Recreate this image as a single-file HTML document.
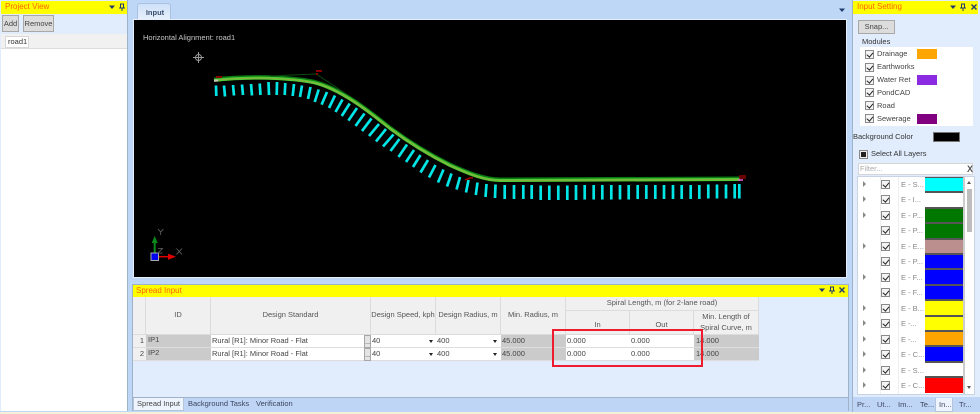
<!DOCTYPE html>
<html><head><meta charset="utf-8"><style>
html,body{margin:0;padding:0;width:980px;height:414px;overflow:hidden;background:#bfd7f6}
body{position:relative;font-family:"Liberation Sans",sans-serif;font-size:7.5px;color:#444}
.a{position:absolute;box-sizing:border-box}
.t{position:absolute;white-space:nowrap;line-height:12px;height:12px}
.y{background:#ffff00;color:#ff6200;font-size:8px;line-height:12px}
.h{position:absolute;box-sizing:border-box;background:#f0f0f0;border-right:1px solid #dcdcdc;border-bottom:1px solid #dcdcdc;display:flex;align-items:center;justify-content:center;text-align:center;line-height:10.5px;color:#555;white-space:nowrap}
.c{position:absolute;box-sizing:border-box;height:13px;line-height:12px;background:#fff;border-bottom:1px solid #ddd;padding-left:1px;white-space:nowrap;color:#444}
.g{background:#cbcbcb}
.b{position:absolute;box-sizing:border-box;background:#dcdcdc;border:1px solid #a8a8a8;text-align:center;color:#444;line-height:15px}
.k{position:absolute;box-sizing:border-box;width:9px;height:9px;background:#f4f4f4;border:1px solid #8a8a8a}
.k:after{content:"";position:absolute;left:2px;top:0;width:2.5px;height:5px;border:solid #222;border-width:0 1.4px 1.4px 0;transform:rotate(40deg)}
.s{position:absolute;left:925px;width:38px;height:15.4px;box-sizing:border-box;border-bottom:1px solid #555;border-top:1px solid #555}
.ar{position:absolute;left:863px;width:0;height:0;border-left:3.5px solid #888;border-top:3.5px solid transparent;border-bottom:3.5px solid transparent}
.n{position:absolute;left:901px;color:#888;white-space:nowrap;line-height:12px}
.dd{position:absolute;width:0;height:0;border-left:2.5px solid transparent;border-right:2.5px solid transparent;border-top:3px solid #222}
</style></head><body>

<!-- Left panel -->
<div class="a" style="left:0;top:0;width:128px;height:411px;background:#e1edfd;border-right:1px solid #9fb2c8"></div>
<div class="a y" style="left:1px;top:1px;width:126px;height:13px;padding-left:4px">Project View</div>
<div class="b" style="left:2px;top:15px;width:17px;height:17px">Add</div>
<div class="b" style="left:23px;top:15px;width:31px;height:17px">Remove</div>
<div class="a" style="left:1px;top:34px;width:126px;height:377px;background:#fff"></div>
<div class="a" style="left:1px;top:34px;width:126px;height:15px;background:#f1f1f1;border-bottom:1px solid #ddd"></div>
<div class="a" style="left:5px;top:36px;width:24px;height:12px;background:#fff;border:1px solid #d8d8d8;line-height:10px;padding-left:2px;color:#333">road1</div>

<!-- Center top -->
<div class="a" style="left:137px;top:3px;width:34px;height:17px;background:linear-gradient(#cfe0f8,#e8f1fd);border:1px solid #a9c2e2;border-bottom:0;border-radius:3px 3px 0 0;text-align:center;line-height:17px;color:#3a4f6e;font-weight:bold;font-size:7.5px;padding-left:2px">Input</div>
<div class="a" style="left:133px;top:19px;width:714px;height:259px;background:#000;border:1px solid #e6eef9"></div>
<svg class="a" style="left:0;top:0" width="980" height="414" viewBox="0 0 980 414">
<path d="M216 85.5L216.3 96M224 85.5L225 96.5M233 85L234 95.5M242 84.5L243 95M251 84L252 95.5M259.7 83.5L260.5 95M268.5 82L269 95M277 82L276.7 95M285.3 83L284.7 95M294 84L292.7 96M302 85.5L300 97M310.5 87L308 99M318.700 89.500L314.700 102M327 92L321.600 104.600M335 95.500L329 108M342.500 99.500L335.500 112M349.700 103.500L341.700 116M357 108L348.400 120.600M364.500 113.500L355.500 126M371.500 118.500L362 131M379 124L369 136M386 129L376 141.500M393.500 134.500L383 146.500M399.500 139L390.500 151M407 144.500L398.500 157M414 150L406 162M420.500 155L413 167M428 160L420.500 172.500M435.500 165L429 177.500M443.500 169.500L438 182.500M451.500 173.500L447 186.500M460 177L456.500 189.500M468.5 180L466 192.5M477.5 182.5L475.8 195M486.5 184L485.5 197M495.5 184.5L495 198M504.7 185L504.7 199M514 185L514 199M523.3 185L523.3 199M531.7 185L531.7 199M540.7 185.5L540.7 200M549.3 185.5L549.3 200M558.3 185.5L558.3 200M567.3 185.5L567.3 200M576 185L576 200M584.7 185L584.7 199.5M593.7 185L593.7 199.5M602.3 185L602.3 199.5M611.3 185L611.3 199.5M620 185L620 199.5M628.7 185L628.7 199.5M637.7 185L637.7 199M646.3 185L646.3 199M655.3 185L655.3 199M664 185L664 199M673 185L673 199M681.7 185L681.7 199M690.7 185L690.7 199M699.3 185L699.3 199M708.3 184.5L708.3 198.5M717 184.5L717 198.5M726 184.5L726 198.5M734.7 184L734.7 198.5M739.3 184L739.3 198.5" stroke="#00e6e6" stroke-width="2.7" fill="none"/>
<path d="M214 78.500C240 75.500 280 74.500 313 80.500C340 86.500 370 110.500 390 126.500C410 141.500 430 153.500 450 163.500C470 172.500 485 178.500 500 178.500L740 177.500" stroke="#0a7a12" stroke-width="2" fill="none"/>
<path d="M214 80.5C240 77.5 280 76.5 313 82.5C340 88.5 370 112.5 390 128.5C410 143.5 430 155.5 450 165.5C470 174.5 485 180.5 500 180.5L740 179.5" stroke="#52cc34" stroke-width="3" fill="none"/>
<path d="M214 80.5C240 77.5 280 76.5 313 82.5C340 88.5 370 112.5 390 128.5C410 143.5 430 155.5 450 165.5C470 174.5 485 180.5 500 180.5L740 179.5" stroke="#96a844" stroke-width="0.8" fill="none"/>
<path d="M270 76L316 74L345 93" stroke="#0a4a12" stroke-width="1" fill="none"/>
<path d="M738 180L743 180" stroke="#e060e0" stroke-width="1.5"/>
<path d="M214 80.5L218 80.5" stroke="#d0c0c0" stroke-width="2"/>
<path d="M316 71H322M316 74H318M216 77H222" stroke="#8a0000" stroke-width="2"/>
<path d="M465 180L470 178H473" stroke="#a00000" stroke-width="1.5" fill="none"/>
<path d="M739 176H746M739 178H746" stroke="#8a0000" stroke-width="1.6"/>
<circle cx="198.500" cy="57.500" r="3" fill="none" stroke="#999" stroke-width="1"/>
<path d="M193 57.500H204M198.500 52V63" stroke="#999" stroke-width="1"/>
<path d="M154.700 253V240" stroke="#0a8a1a" stroke-width="2"/>
<path d="M154.700 236L151.700 243H157.700Z" fill="#0a8a1a"/>
<path d="M159 256.700H170" stroke="#e00000" stroke-width="1.500"/>
<path d="M176 256.700L168 253.700V259.700Z" fill="#e00000"/>
<rect x="151" y="253" width="7.500" height="7.500" fill="#0000f0" stroke="#aaa" stroke-width="1"/>
<path d="M158 229L160.700 232L163.400 229M160.700 232V235M176.500 248.500L182 254.500M182 248.500L176.500 254.500M158 248.500H162.500L158 253H162.500" stroke="#666" stroke-width="0.800" fill="none"/>
</svg>
<div class="t" style="left:143px;top:32px;color:#c8c8c8">Horizontal Alignment: road1</div>

<!-- Spread panel -->
<div class="a" style="left:132px;top:284px;width:717px;height:127px;background:#e1edfd;border:1px solid #9fb2c8"></div>
<div class="a y" style="left:133px;top:285px;width:715px;height:12px;padding-left:3px;line-height:12px">Spread Input</div>

<div class="h" style="left:133px;top:297px;width:13px;height:38px"></div>
<div class="h" style="left:146px;top:297px;width:65px;height:38px">ID</div>
<div class="h" style="left:211px;top:297px;width:160px;height:38px">Design Standard</div>
<div class="h" style="left:371px;top:297px;width:65px;height:38px">Design Speed, kph</div>
<div class="h" style="left:436px;top:297px;width:65px;height:38px">Design Radius, m</div>
<div class="h" style="left:501px;top:297px;width:65px;height:38px">Min. Radius, m</div>
<div class="h" style="left:566px;top:297px;width:193px;height:14px">Spiral Length, m (for 2-lane road)</div>
<div class="h" style="left:566px;top:311px;width:64px;height:24px;padding-top:6px">In</div>
<div class="h" style="left:630px;top:311px;width:64px;height:24px;padding-top:6px">Out</div>
<div class="h" style="left:694px;top:311px;width:65px;height:24px">Min. Length of<br>Spiral Curve, m</div>

<div class="c" style="left:133px;top:335px;width:13px;background:#f0f0f0;text-align:right;padding-right:2px">1</div>
<div class="c g" style="left:146px;top:335px;width:65px;padding-left:2px;line-height:10px">IP1</div>
<div class="c" style="left:211px;top:335px;width:160px">Rural [R1]: Minor Road - Flat</div>
<div class="b" style="left:364px;top:335px;width:7px;height:13px;line-height:13px;background:#e4e4e4;font-size:7px">...</div>
<div class="c" style="left:371px;top:335px;width:65px">40</div><div class="dd" style="left:429px;top:340px"></div>
<div class="c" style="left:436px;top:335px;width:65px">400</div><div class="dd" style="left:493px;top:340px"></div>
<div class="c g" style="left:501px;top:335px;width:65px">45.000</div>
<div class="c" style="left:566px;top:335px;width:64px">0.000</div>
<div class="c" style="left:630px;top:335px;width:64px">0.000</div>
<div class="c g" style="left:694px;top:335px;width:65px;padding-left:2px">14.000</div>

<div class="c" style="left:133px;top:348px;width:13px;background:#f0f0f0;text-align:right;padding-right:2px">2</div>
<div class="c g" style="left:146px;top:348px;width:65px;padding-left:2px;line-height:10px">IP2</div>
<div class="c" style="left:211px;top:348px;width:160px">Rural [R1]: Minor Road - Flat</div>
<div class="b" style="left:364px;top:348px;width:7px;height:13px;line-height:13px;background:#e4e4e4;font-size:7px">...</div>
<div class="c" style="left:371px;top:348px;width:65px">40</div><div class="dd" style="left:429px;top:353px"></div>
<div class="c" style="left:436px;top:348px;width:65px">400</div><div class="dd" style="left:493px;top:353px"></div>
<div class="c g" style="left:501px;top:348px;width:65px">45.000</div>
<div class="c" style="left:566px;top:348px;width:64px">0.000</div>
<div class="c" style="left:630px;top:348px;width:64px">0.000</div>
<div class="c g" style="left:694px;top:348px;width:65px;padding-left:2px">14.000</div>

<div class="a" style="left:552px;top:329px;width:151px;height:38px;border:2.5px solid #ee1c2e"></div>

<div class="a" style="left:133px;top:397px;width:715px;height:14px;background:#bfd5f5;border-top:1px solid #9fb2c8"></div>
<div class="a" style="left:133px;top:398px;width:51px;height:13px;background:#eef4fd;border:1px solid #b4c4da;border-top:0;text-align:center;line-height:12px;color:#444">Spread Input</div>
<div class="t" style="left:188px;top:398px;color:#3a4560">Background Tasks</div>
<div class="t" style="left:256px;top:398px;color:#3a4560">Verification</div>

<!-- Right panel -->
<div class="a" style="left:852px;top:0;width:128px;height:412px;background:#e1edfd;border-left:1px solid #9fb2c8"></div>
<div class="a y" style="left:853px;top:1px;width:125px;height:13px;padding-left:4px">Input Setting</div>
<div class="b" style="left:858px;top:20px;width:37px;height:14px;line-height:12px">Snap...</div>
<div class="t" style="left:862px;top:36px;color:#333">Modules</div>
<div class="a" style="left:860px;top:47px;width:113px;height:79px;background:#fff"></div>

<div class="k" style="left:865px;top:50px"></div><div class="t" style="left:877px;top:48px">Drainage</div>
<div class="a" style="left:917px;top:49px;width:20px;height:10px;background:#ffa500"></div>
<div class="k" style="left:865px;top:63px"></div><div class="t" style="left:877px;top:61px">Earthworks</div>
<div class="k" style="left:865px;top:76px"></div><div class="t" style="left:877px;top:74px">Water Ret</div>
<div class="a" style="left:917px;top:75px;width:20px;height:10px;background:#8a2be2"></div>
<div class="k" style="left:865px;top:88px"></div><div class="t" style="left:877px;top:87px">PondCAD</div>
<div class="k" style="left:865px;top:101px"></div><div class="t" style="left:877px;top:100px">Road</div>
<div class="k" style="left:865px;top:114px"></div><div class="t" style="left:877px;top:113px">Sewerage</div>
<div class="a" style="left:917px;top:114px;width:20px;height:10px;background:#800080"></div>

<div class="t" style="left:853px;top:131px;color:#333">Background Color</div>
<div class="a" style="left:933px;top:132px;width:27px;height:10px;background:#000;border:1px solid #777"></div>
<div class="a" style="left:859px;top:150px;width:9px;height:9px;background:#eee;border:1px solid #888"></div>
<div class="a" style="left:861px;top:152px;width:5px;height:5px;background:#222"></div>
<div class="t" style="left:871px;top:148px;color:#333">Select All Layers</div>
<div class="a" style="left:858px;top:163px;width:115px;height:12px;background:#fff;border:1px solid #d5d5d5;line-height:10px;padding-left:1px;color:#aaa">Filter...</div>
<div class="t" style="left:967px;top:163px;color:#555;font-weight:bold;font-size:9px">X</div>

<div class="a" style="left:857px;top:176px;width:118px;height:219px;background:#fff;border:1px solid #c8d4e4"></div>
<div class="a" style="left:880px;top:177px;width:1px;height:217px;background:#eee"></div>
<div class="a" style="left:898px;top:177px;width:1px;height:217px;background:#eee"></div>
<div class="a" style="left:963px;top:177px;width:2px;height:217px;background:#ccc"></div>
<div class="a" style="left:967px;top:189px;width:5px;height:43px;background:#bdbdbd"></div>
<div class="dd" style="left:967px;top:386px;border-top-color:#555;border-left-width:2px;border-right-width:2px"></div>
<div class="dd" style="left:967px;top:181px;border-top:0;border-bottom:3px solid #555;border-left-width:2px;border-right-width:2px"></div>

<div class="ar" style="top:181px"></div><div class="k" style="left:881px;top:180px"></div><div class="n" style="top:179px">E - S...</div><div class="s" style="top:177px;background:#00ffff"></div>
<div class="ar" style="top:196px"></div><div class="k" style="left:881px;top:195px"></div><div class="n" style="top:194px">E - I...</div><div class="s" style="top:192.400px;background:#fff"></div>
<div class="ar" style="top:212px"></div><div class="k" style="left:881px;top:211px"></div><div class="n" style="top:210px">E - P...</div><div class="s" style="top:207.800px;background:#007800"></div>
<div class="k" style="left:881px;top:226px"></div><div class="n" style="top:225px">E - P...</div><div class="s" style="top:223.200px;background:#007800"></div>
<div class="ar" style="top:243px"></div><div class="k" style="left:881px;top:242px"></div><div class="n" style="top:241px">E - E...</div><div class="s" style="top:238.600px;background:#bc8f8f"></div>
<div class="k" style="left:881px;top:257px"></div><div class="n" style="top:256px">E - P...</div><div class="s" style="top:254px;background:#0000ff"></div>
<div class="ar" style="top:274px"></div><div class="k" style="left:881px;top:273px"></div><div class="n" style="top:272px">E - F...</div><div class="s" style="top:269.400px;background:#0000ff"></div>
<div class="k" style="left:881px;top:288px"></div><div class="n" style="top:287px">E - F...</div><div class="s" style="top:284.800px;background:#0000ff"></div>
<div class="ar" style="top:305px"></div><div class="k" style="left:881px;top:304px"></div><div class="n" style="top:303px">E - B...</div><div class="s" style="top:300.200px;background:#ffff00"></div>
<div class="ar" style="top:320px"></div><div class="k" style="left:881px;top:319px"></div><div class="n" style="top:318px">E -...</div><div class="s" style="top:315.600px;background:#ffff00"></div>
<div class="ar" style="top:336px"></div><div class="k" style="left:881px;top:335px"></div><div class="n" style="top:334px">E -...</div><div class="s" style="top:331px;background:#ffa500"></div>
<div class="ar" style="top:351px"></div><div class="k" style="left:881px;top:350px"></div><div class="n" style="top:349px">E - C...</div><div class="s" style="top:346.400px;background:#0000ff"></div>
<div class="ar" style="top:367px"></div><div class="k" style="left:881px;top:366px"></div><div class="n" style="top:365px">E - S...</div><div class="s" style="top:361.800px;background:#fff"></div>
<div class="ar" style="top:382px"></div><div class="k" style="left:881px;top:381px"></div><div class="n" style="top:380px">E - C...</div><div class="s" style="top:377.200px;height:15.800px;background:#ff0000;border-bottom:0"></div>

<div class="a" style="left:853px;top:397px;width:127px;height:15px;background:#bfd5f5"></div>
<div class="a" style="left:935px;top:398px;width:18px;height:14px;background:#eef4fd;border:1px solid #b4c4da;border-top:0"></div>
<div class="t" style="left:857px;top:399px;color:#3a4560">Pr...</div>
<div class="t" style="left:877px;top:399px;color:#3a4560">Ut...</div>
<div class="t" style="left:898px;top:399px;color:#3a4560">Im...</div>
<div class="t" style="left:920px;top:399px;color:#3a4560">Te...</div>
<div class="t" style="left:939px;top:399px;color:#3a4560">In...</div>
<div class="t" style="left:959px;top:399px;color:#3a4560">Tr...</div>

<div class="a" style="left:0;top:412px;width:980px;height:2px;background:#f4f1d8"></div>

<!-- Title bar glyphs: dropdown arrows, pins, close marks -->
<svg class="a" style="left:0;top:0" width="980" height="414" viewBox="0 0 980 414">
<path d="M109 5.500H115L112 9ZM950 5.500H956L953 9ZM819 288.500H825L822 292ZM839 8.500H845L842 12Z" fill="#1f3a6e"/>
<path d="M120 4H124M120.500 4V8M123.500 4V8M119 8H125M122 8V11M961 4H965M961.500 4V8M964.500 4V8M960 8H966M963 8V11M830 287H834M830.500 287V291M833.500 287V291M829 291H835M832 291V294" stroke="#1f3a6e" stroke-width="1" fill="none"/>
<path d="M971.500 4.500L976.500 9.500M976.500 4.500L971.500 9.500M839.500 287.500L844.500 292.500M844.500 287.500L839.500 292.500" stroke="#1f3a6e" stroke-width="1.400" fill="none"/>
</svg>
</body></html>
